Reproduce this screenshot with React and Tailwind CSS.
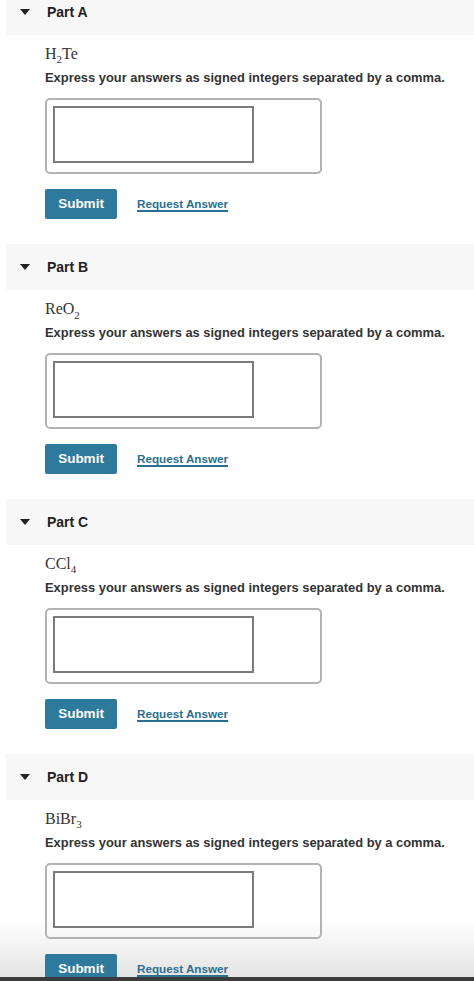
import React from 'react';

const parts = [
  { label: 'Part A', formula: <>H<sub className="text-[11px] align-[-1px]">2</sub>Te</> },
  { label: 'Part B', formula: <>ReO<sub className="text-[11px] align-[-2px]">2</sub></> },
  { label: 'Part C', formula: <>CCl<sub className="text-[11px] align-[-1px]">4</sub></> },
  { label: 'Part D', formula: <>BiBr<sub className="text-[11px] align-[-1px]">3</sub></> },
];

function Part({ label, formula }) {
  return (
    <section className="pb-[25px]">
      <div className="ml-[6px] h-[46px] bg-[#f7f7f7] flex items-center">
        <svg width="10" height="6" viewBox="0 0 10 6" className="ml-[14px]">
          <path d="M0 0 L10 0 L5 6 Z" fill="#222" />
        </svg>
        <span className="ml-[17px] text-[14px] font-bold text-[#222]">{label}</span>
      </div>
      <div className="pl-[45px]">
        <div className="mt-[9px] h-[20px] leading-[20px] text-[16px] text-[#333] font-['Liberation_Serif','DejaVu_Serif',serif]">
          {formula}
        </div>
        <p className="mt-[6px] h-[16px] leading-[16px] text-[12.9px] font-bold text-[#333]">
          Express your answers as signed integers separated by a comma.
        </p>
        <div className="mt-[12px] w-[277px] h-[76px] border-2 border-[#b3b3b3] rounded-[5px] pt-[6px] pl-[6px]">
          <div className="w-[201px] h-[57px] border-2 border-[#7b7b7b] bg-white" />
        </div>
        <div className="mt-[15px] flex items-center">
          <button className="w-[72px] h-[30px] bg-[#2e7a9c] rounded-[2px] text-white text-[13.5px] font-bold">
            Submit
          </button>
          <a className="ml-[20px] text-[11.7px] font-bold text-[#2a6f91] underline decoration-2 underline-offset-[2px]">
            Request Answer
          </a>
        </div>
      </div>
    </section>
  );
}

export default function App() {
  return (
    <div className="relative w-[474px] h-[981px] overflow-hidden bg-white font-['Liberation_Sans',Arial,sans-serif]">
      <div className="absolute left-0 right-0 top-[920px] h-[57px] bg-gradient-to-b from-white to-[#e4e4e4]" />
      <div className="relative mt-[-11px]">
        {parts.map((p) => (
          <Part key={p.label} {...p} />
        ))}
      </div>
      <div className="absolute left-0 right-0 top-[977px] h-[4px] bg-[#3b3b3b]" />
    </div>
  );
}
